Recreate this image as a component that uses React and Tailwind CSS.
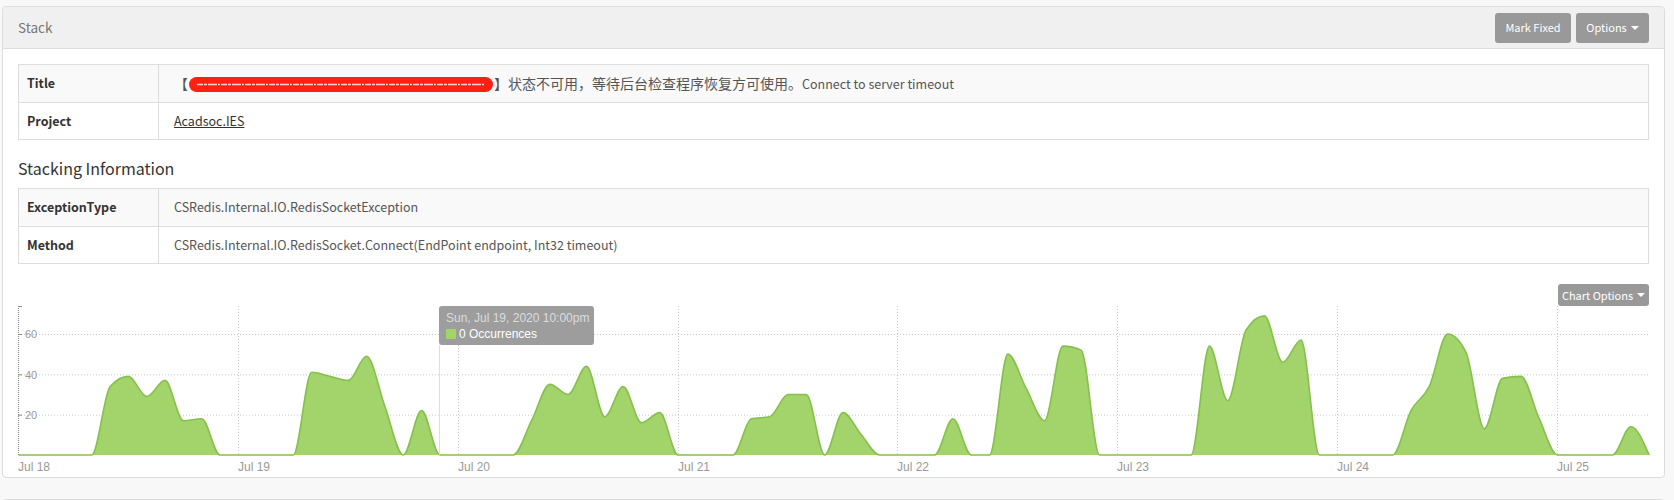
import React from "react";

// two-hour buckets, Jul 18 00:00 -> Jul 25 10:00
const counts = [
  0, 0, 0, 0, 0, 34, 39, 29, 37, 17, 18, 0,
  0, 0, 0, 0, 41, 39, 37, 49, 24, 0, 22, 0,
  0, 0, 0, 0, 17, 35, 30, 44, 19, 34, 16, 21,
  0, 0, 0, 0, 18, 19, 30, 30, 0, 21, 10, 0,
  0, 0, 0, 18, 0, 0, 50, 33, 17, 54, 52, 0,
  0, 0, 0, 0, 0, 54, 27, 62, 69, 46, 57, 0,
  0, 0, 0, 0, 22, 34, 60, 51, 13, 38, 39, 18,
  0, 0, 0, 0, 14, 0,
];

const HOUR = 9.161;
const BASE = 149;
const PER = 2.0167;
const CHART_W = 1632;

function monotone(pts) {
  const n = pts.length;
  const t = new Array(n).fill(0);
  const sign = (v) => (v < 0 ? -1 : 1);
  for (let i = 1; i < n - 1; i++) {
    const h0 = pts[i][0] - pts[i - 1][0];
    const h1 = pts[i + 1][0] - pts[i][0];
    const s0 = (pts[i][1] - pts[i - 1][1]) / h0;
    const s1 = (pts[i + 1][1] - pts[i][1]) / h1;
    const p = (s0 * h1 + s1 * h0) / (h0 + h1);
    t[i] = (sign(s0) + sign(s1)) * Math.min(Math.abs(s0), Math.abs(s1), 0.5 * Math.abs(p)) || 0;
  }
  const hA = pts[1][0] - pts[0][0];
  t[0] = (3 * (pts[1][1] - pts[0][1]) / hA - t[1]) / 2;
  const hB = pts[n - 1][0] - pts[n - 2][0];
  t[n - 1] = (3 * (pts[n - 1][1] - pts[n - 2][1]) / hB - t[n - 2]) / 2;
  let d = `M${pts[0][0].toFixed(2)},${pts[0][1].toFixed(2)}`;
  for (let i = 0; i < n - 1; i++) {
    const [x0, y0] = pts[i];
    const [x1, y1] = pts[i + 1];
    const dx = (x1 - x0) / 3;
    d += `C${(x0 + dx).toFixed(2)},${(y0 + dx * t[i]).toFixed(2)},${(x1 - dx).toFixed(2)},${(y1 - dx * t[i + 1]).toFixed(2)},${x1.toFixed(2)},${y1.toFixed(2)}`;
  }
  return d;
}

const pts = counts.map((v, i) => [0.5 + i * 2 * HOUR, BASE - v * PER]);
const linePath = monotone(pts);
const areaPath = `${linePath}L${pts[pts.length - 1][0].toFixed(2)},${BASE}L${pts[0][0]},${BASE}Z`;

const days = ["Jul 18", "Jul 19", "Jul 20", "Jul 21", "Jul 22", "Jul 23", "Jul 24", "Jul 25"];

function Caret() {
  return <span className="ml-[4px] inline-block h-0 w-0 border-x-[4px] border-t-[4px] border-x-transparent border-t-white align-middle" />;
}

function InfoTable({ rows }) {
  return (
    <div className="border border-[#dddddd]">
      {rows.map((r, i) => (
        <div key={r.label} className={`flex h-[37px] items-center ${i > 0 ? "border-t border-[#dddddd] bg-white" : "h-[36px] bg-[#f9f9f9]"}`}>
          <div className="flex h-full w-[140px] shrink-0 items-center border-r border-[#dddddd] pl-[8px] text-[12.5px] font-bold text-[#333333]">
            {r.label}
          </div>
          <div className="pl-[15px] text-[12.5px] text-[#555555]">{r.value}</div>
        </div>
      ))}
    </div>
  );
}

function Redacted() {
  return (
    <span className="mx-[1px] inline-block h-[15px] w-[304px] rounded-full bg-[#ff2014] align-[-3px]">
      <svg width="304" height="15" className="block">
        <line x1="8" y1="7.5" x2="296" y2="7.5" stroke="#ffd6d2" strokeWidth="1.4" strokeDasharray="6 1 3 1 9 1 2 1" />
      </svg>
    </span>
  );
}

function Chart() {
  return (
    <div className="relative h-[171px] w-[1632px]">
      <svg width={CHART_W} height="171" className="block overflow-visible" style={{ fontFamily: "'Liberation Sans', Arial, sans-serif" }}>
        {[20, 40, 60].map((v) => (
          <line key={v} x1="0" x2="1631" y1={BASE - v * PER + 0.5} y2={BASE - v * PER + 0.5} stroke="#c8c8c8" strokeDasharray="1 2" />
        ))}
        {days.slice(1).map((d, i) => {
          const x = Math.round((i + 1) * 24 * HOUR) + 0.5;
          return <line key={d} x1={x} x2={x} y1="0" y2={BASE} stroke="#c8c8c8" strokeDasharray="1 2" />;
        })}
        <path d={areaPath} fill="#a3d36b" />
        <path d={linePath} fill="none" stroke="#86c04c" strokeWidth="1.6" />
        <line x1="421.5" x2="421.5" y1="39" y2={BASE} stroke="#dedede" />
        <line x1="0.5" x2="0.5" y1="0" y2={BASE} stroke="#8a8a8a" strokeDasharray="1 1" />
        <line x1="0" x2="4" y1="0.5" y2="0.5" stroke="#8a8a8a" />
        {[20, 40, 60].map((v) => (
          <g key={v}>
            <line x1="0" x2="4" y1={BASE - v * PER + 0.5} y2={BASE - v * PER + 0.5} stroke="#8a8a8a" />
            <text x="7" y={BASE - v * PER + 4.5} fontSize="11" fill="#999999">{v}</text>
          </g>
        ))}
        {days.map((d, i) => (
          <text key={d} x={Math.round(i * 24 * HOUR)} y="165" fontSize="12" fill="#999999">{d}</text>
        ))}
      </svg>
      <div className="absolute left-[421px] top-0 h-[39px] w-[155px] rounded-[3px] bg-[#9d9d9d] pl-[7px] pt-[4px] text-[12px] leading-[16px]" style={{ fontFamily: "'Liberation Sans', Arial, sans-serif" }}>
        <div className="text-[#dcdcdc]">Sun, Jul 19, 2020 10:00pm</div>
        <div className="flex items-center text-white">
          <span className="mr-[3px] inline-block h-[10px] w-[10px] bg-[#a3d36b]" />
          0 Occurrences
        </div>
      </div>
    </div>
  );
}

export default function App() {
  return (
    <div className="min-h-[500px] bg-[#f8f8f8] pl-[2px] pt-[6px]" style={{ fontFamily: "'Noto Sans CJK SC', 'Noto Sans', sans-serif" }}>
      <div className="w-[1663px] rounded-[4px] border border-[#dddddd] bg-white">
        <div className="flex h-[42px] items-center justify-between rounded-t-[4px] border-b border-[#dddddd] bg-[#f0f0f0] px-[15px]">
          <span className="text-[13.5px] text-[#777777]">Stack</span>
          <div className="flex gap-[5px]">
            <button className="h-[30px] w-[76px] rounded-[3px] bg-[#999999] text-[11px] text-white">Mark Fixed</button>
            <button className="flex h-[30px] w-[73px] items-center justify-center rounded-[3px] bg-[#999999] text-[11px] text-white">
              Options<Caret />
            </button>
          </div>
        </div>

        <div className="px-[15px] pt-[15px]">
          <InfoTable
            rows={[
              {
                label: "Title",
                value: (
                  <span className="whitespace-nowrap">
                    <span className="text-[14px]">【</span>
                    <Redacted />
                    <span className="text-[14px]">】状态不可用，等待后台检查程序恢复方可使用。</span>
                    Connect to server timeout
                  </span>
                ),
              },
              { label: "Project", value: <a className="text-[#333333] underline">Acadsoc.IES</a> },
            ]}
          />

          <h4 className="mb-[10px] mt-[18px] h-[20px] text-[16px] leading-[20px] text-[#333333]">Stacking Information</h4>

          <InfoTable
            rows={[
              { label: "ExceptionType", value: "CSRedis.Internal.IO.RedisSocketException" },
              { label: "Method", value: "CSRedis.Internal.IO.RedisSocket.Connect(EndPoint endpoint, Int32 timeout)" },
            ]}
          />

          <div className="mt-[20px] flex justify-end">
            <button className="flex h-[22px] w-[91px] items-center justify-center rounded-[3px] bg-[#999999] text-[11px] text-white">
              Chart Options<Caret />
            </button>
          </div>
          <Chart />
        </div>
      </div>
      <div className="mt-[21px] h-[20px] w-[1663px] rounded-t-[4px] border border-[#dddddd] bg-white" />
    </div>
  );
}
